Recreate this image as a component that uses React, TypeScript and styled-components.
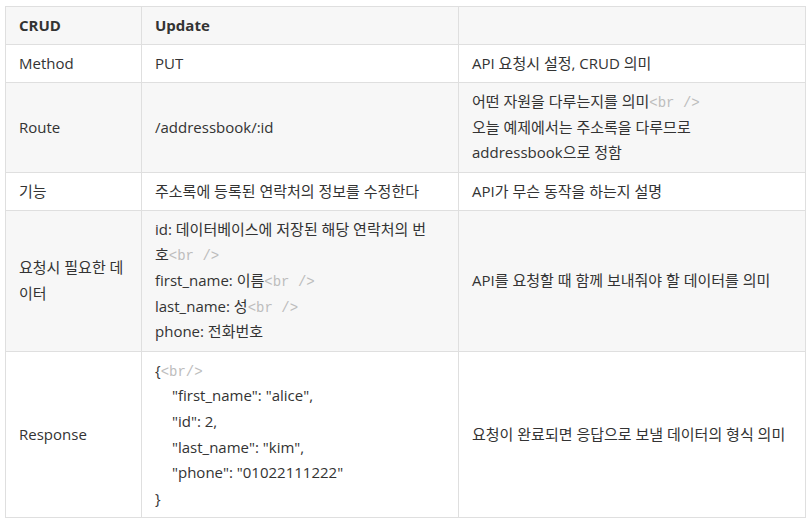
import React from 'react';
import styled, { createGlobalStyle } from 'styled-components';

const GlobalStyle = createGlobalStyle`
  body {
    margin: 0;
    background: #ffffff;
    font-family: 'Open Sans', 'Noto Sans CJK KR', sans-serif;
    color: #333333;
  }
`;

const Page = styled.div`
  padding: 6px 6px 0 5px;
`;

const Table = styled.table`
  width: 800px;
  border-collapse: collapse;
  table-layout: fixed;
  font-size: 15px;
  line-height: 25px;
`;

const Row = styled.tr<{ $shaded?: boolean }>`
  background-color: ${({ $shaded }) => ($shaded ? '#f7f7f7' : '#ffffff')};
`;

const HeadCell = styled.th`
  border: 1px solid #dfdfdf;
  padding: 6px 13px;
  text-align: left;
  font-weight: 700;
  vertical-align: middle;
`;

const Cell = styled.td`
  border: 1px solid #dfdfdf;
  padding: 6px 13px;
  vertical-align: middle;
`;

const Line = styled.div<{ $indent?: boolean }>`
  height: 25.6px;
  line-height: 25.6px;
  padding-left: ${({ $indent }) => ($indent ? '17px' : '0')};
  white-space: nowrap;
`;

const Tag = styled.span`
  font-family: 'Liberation Mono', monospace;
  font-size: 14px;
  line-height: 1;
  color: #bdbdbd;
`;

const App: React.FC = () => {
  return (
    <Page>
      <GlobalStyle />
      <Table>
        <colgroup>
          <col style={{ width: 136 }} />
          <col style={{ width: 317 }} />
          <col style={{ width: 347 }} />
        </colgroup>
        <thead>
          <Row $shaded>
            <HeadCell>CRUD</HeadCell>
            <HeadCell>Update</HeadCell>
            <HeadCell></HeadCell>
          </Row>
        </thead>
        <tbody>
          <Row>
            <Cell>Method</Cell>
            <Cell>PUT</Cell>
            <Cell>API 요청시 설정, CRUD 의미</Cell>
          </Row>
          <Row $shaded>
            <Cell>Route</Cell>
            <Cell>/addressbook/:id</Cell>
            <Cell>
              <Line>
                어떤 자원을 다루는지를 의미<Tag>&lt;br /&gt;</Tag>
              </Line>
              <Line>오늘 예제에서는 주소록을 다루므로</Line>
              <Line>addressbook으로 정함</Line>
            </Cell>
          </Row>
          <Row>
            <Cell>기능</Cell>
            <Cell>주소록에 등록된 연락처의 정보를 수정한다</Cell>
            <Cell>API가 무슨 동작을 하는지 설명</Cell>
          </Row>
          <Row $shaded>
            <Cell>
              <Line>요청시 필요한 데</Line>
              <Line>이터</Line>
            </Cell>
            <Cell>
              <Line>id: 데이터베이스에 저장된 해당 연락처의 번</Line>
              <Line>
                호<Tag>&lt;br /&gt;</Tag>
              </Line>
              <Line>
                first_name: 이름<Tag>&lt;br /&gt;</Tag>
              </Line>
              <Line>
                last_name: 성<Tag>&lt;br /&gt;</Tag>
              </Line>
              <Line>phone: 전화번호</Line>
            </Cell>
            <Cell>API를 요청할 때 함께 보내줘야 할 데이터를 의미</Cell>
          </Row>
          <Row>
            <Cell>Response</Cell>
            <Cell>
              <Line>
                {'{'}
                <Tag>&lt;br/&gt;</Tag>
              </Line>
              <Line $indent>"first_name": "alice",</Line>
              <Line $indent>"id": 2,</Line>
              <Line $indent>"last_name": "kim",</Line>
              <Line $indent>"phone": "01022111222"</Line>
              <Line>{'}'}</Line>
            </Cell>
            <Cell>요청이 완료되면 응답으로 보낼 데이터의 형식 의미</Cell>
          </Row>
        </tbody>
      </Table>
    </Page>
  );
};

export default App;
